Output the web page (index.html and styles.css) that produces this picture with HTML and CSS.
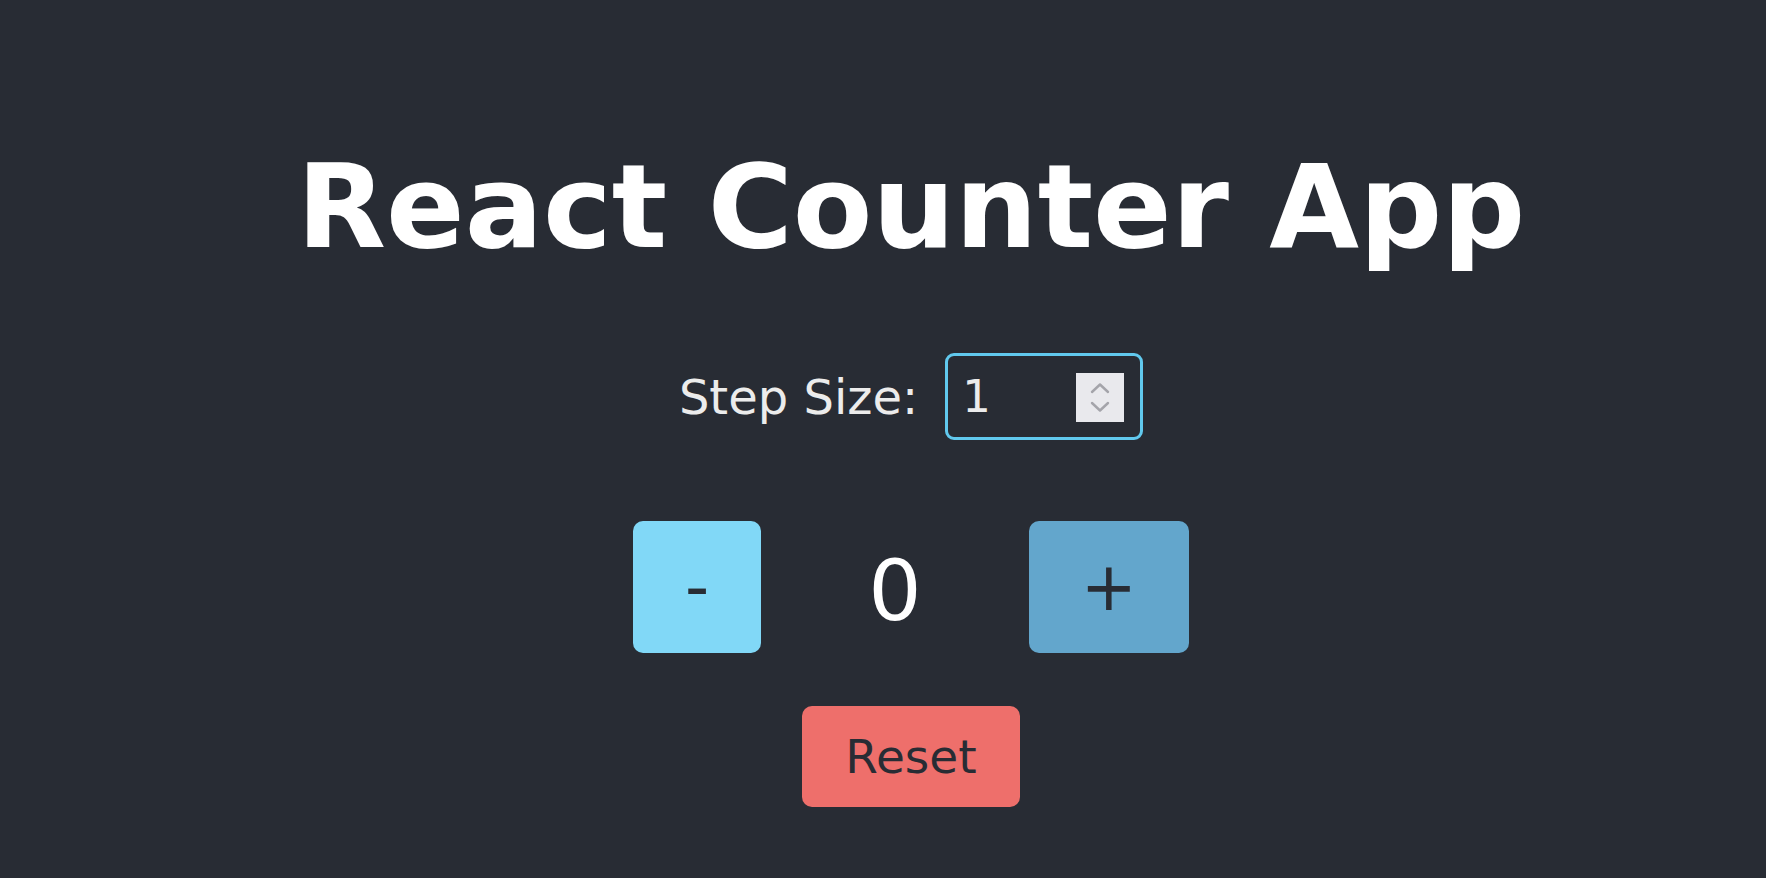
FILE: index.html
```html
<!DOCTYPE html>
<html lang="en">
<head>
<meta charset="utf-8">
<title>React Counter App</title>
<link rel="stylesheet" href="styles.css">
</head>
<body>
<div class="app">
  <h1 class="title">React Counter App</h1>
  <div class="step-row">
    <label class="step-label" for="step">Step Size:</label>
    <div class="step-field">
      <input id="step" class="step-input" type="number" value="1">
      <span class="spinner" aria-hidden="true">
        <svg width="48" height="49" viewBox="0 0 48 49">
          <path d="M16 19 L24 11.5 L32 19" fill="none" stroke="#a4a4aa" stroke-width="2.4" stroke-linecap="round" stroke-linejoin="round"/>
          <path d="M16 30 L24 37.5 L32 30" fill="none" stroke="#a4a4aa" stroke-width="2.4" stroke-linecap="round" stroke-linejoin="round"/>
        </svg>
      </span>
    </div>
  </div>
  <div class="counter-row">
    <button class="btn btn-minus">-</button>
    <span class="count">0</span>
    <button class="btn btn-plus">+</button>
  </div>
  <button class="btn-reset">Reset</button>
</div>
</body>
</html>
```

FILE: styles.css
```css
html, body {
  margin: 0;
  padding: 0;
  background: #282c34;
  height: 100%;
}

body {
  font-family: "DejaVu Sans", "Liberation Sans", sans-serif;
  color: #ffffff;
}

.app {
  display: flex;
  flex-direction: column;
  align-items: center;
  padding-top: 139px;
  padding-left: 56px;
}

.title {
  margin: 0;
  font-size: 116px;
  font-weight: bold;
  line-height: normal;
  color: #ffffff;
}

.step-row {
  display: flex;
  align-items: center;
  gap: 27px;
  margin-top: 79px;
}

.step-label {
  font-size: 48px;
  color: #ececec;
  line-height: normal;
}

.step-field {
  position: relative;
  width: 198px;
  height: 87px;
}

.step-input {
  box-sizing: border-box;
  width: 198px;
  height: 87px;
  border: 3px solid #61c9ee;
  border-radius: 9px;
  background: #282c34;
  color: #ececec;
  font-family: "DejaVu Sans", "Liberation Sans", sans-serif;
  font-size: 45px;
  padding: 0 0 0 14px;
  outline: none;
  -moz-appearance: textfield;
}

.step-input::-webkit-inner-spin-button,
.step-input::-webkit-outer-spin-button {
  -webkit-appearance: none;
  margin: 0;
}

.spinner {
  position: absolute;
  top: 20px;
  right: 19px;
  width: 48px;
  height: 49px;
  background: #e9e9ed;
  display: block;
}

.spinner svg {
  display: block;
}

.counter-row {
  display: flex;
  align-items: center;
  gap: 107px;
  margin-top: 81px;
}

.btn {
  font-family: "DejaVu Sans", "Liberation Sans", sans-serif;
  font-size: 67px;
  line-height: normal;
  padding: 27px 52px;
  border: none;
  border-radius: 10px;
  color: #282c34;
  cursor: pointer;
}

.btn-minus {
  background: #81d8f7;
}

.btn-plus {
  background: #63a6cc;
}

.count {
  font-size: 84px;
  line-height: normal;
  padding-top: 8px;
  color: #ffffff;
}

.btn-reset {
  margin-top: 53px;
  font-family: "DejaVu Sans", "Liberation Sans", sans-serif;
  font-size: 47px;
  line-height: normal;
  padding: 23px 43px;
  border: none;
  border-radius: 10px;
  background: #ee6f6b;
  color: #282c34;
  cursor: pointer;
}
```
